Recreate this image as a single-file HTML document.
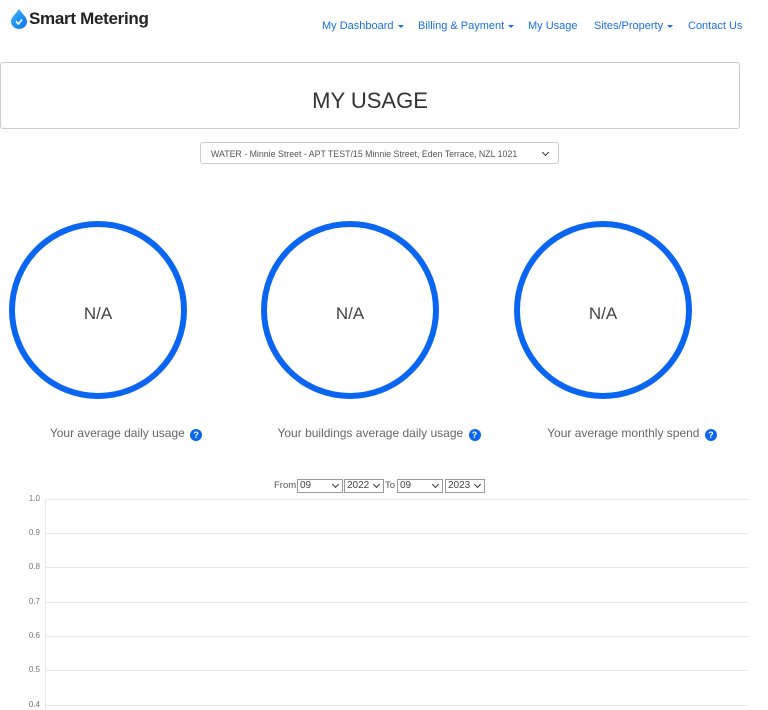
<!DOCTYPE html>
<html><head><meta charset="utf-8"><style>
body{margin:0;width:768px;height:710px;overflow:hidden;background:#fff;font-family:"Liberation Sans",Arial,sans-serif;position:relative}
.a{position:absolute}
.nav{top:20px;font-size:11px;color:#1a6fe8;white-space:nowrap}
.caret{display:inline-block;width:0;height:0;border-left:3px solid transparent;border-right:3px solid transparent;border-top:3px solid #1a6fe8;vertical-align:middle;margin-left:4px}
.circ{width:166px;height:166px;border:6px solid #0a66f0;border-radius:50%;top:221px;display:flex;align-items:center;justify-content:center;font-size:17px;color:#444;padding-top:7px;box-sizing:content-box;height:159px}
.lbl{top:426px;font-size:12px;color:#666;white-space:nowrap;text-align:center;width:260px}
.q{display:inline-block;width:12px;height:12px;border-radius:50%;background:#0a66f0;color:#fff;font-size:9px;font-weight:bold;text-align:center;line-height:12px;vertical-align:-1px;margin-left:2px}
.sel{border:1px solid #999;font-size:10px;color:#444;height:12px;line-height:12px;top:479px;padding-left:2px;box-sizing:content-box}
.chev{position:absolute;width:4px;height:4px;border-right:1.5px solid #333;border-bottom:1.5px solid #333;transform:rotate(45deg)}
.sel .chev{right:4px;top:2px}
.g{left:45px;width:703px;height:1px;background:#e8e8e8}
.yl{left:18px;width:22px;text-align:right;font-size:8px;color:#777}
</style></head><body>
<svg class="a" style="left:10px;top:9px" width="18" height="20" viewBox="0 0 18 20"><defs><linearGradient id="d" x1="0" y1="0" x2="1" y2="1"><stop offset="0" stop-color="#3fb4ff"/><stop offset="1" stop-color="#0a72e8"/></linearGradient></defs><path d="M9 0 C12 5 17 8 17 12.5 A8 7.5 0 0 1 1 12.5 C1 8 6 5 9 0Z" fill="url(#d)"/><path d="M6 12.5 L8.5 15 L12 10.5" stroke="#fff" stroke-width="1.6" fill="none"/></svg>
<div class="a" style="left:29px;top:9px;font-size:17px;font-weight:bold;color:#222;letter-spacing:-0.3px">Smart Metering</div>
<div class="a nav" style="left:322px">My Dashboard<i class="caret"></i></div>
<div class="a nav" style="left:418px">Billing &amp; Payment<i class="caret"></i></div>
<div class="a nav" style="left:528px">My Usage</div>
<div class="a nav" style="left:594px">Sites/Property<i class="caret"></i></div>
<div class="a nav" style="left:688px">Contact Us</div>
<div class="a" style="left:0;top:62px;width:738px;height:65px;border:1px solid #ccc;border-radius:3px;text-align:center;line-height:76px;font-size:22px;color:#333">MY USAGE</div>
<div class="a" style="left:200px;top:142px;width:359px;height:22px;border:1px solid #ccc;border-radius:3px;font-size:8.8px;color:#555;line-height:22px;padding-left:10px;box-sizing:border-box">WATER - Minnie Street - APT TEST/15 Minnie Street, Eden Terrace, NZL 1021<i class="chev" style="right:10px;top:7px"></i></div>
<div class="a circ" style="left:9px">N/A</div>
<div class="a circ" style="left:261px">N/A</div>
<div class="a circ" style="left:514px">N/A</div>
<div class="a lbl" style="left:-4px">Your average daily usage <span class="q">?</span></div>
<div class="a lbl" style="left:249px">Your buildings average daily usage <span class="q">?</span></div>
<div class="a lbl" style="left:502px">Your average monthly spend <span class="q">?</span></div>
<div class="a" style="left:274px;top:480px;font-size:9.5px;color:#555">From</div>
<div class="a sel" style="left:297px;width:42px">09<i class="chev"></i></div>
<div class="a sel" style="left:344px;width:36px">2022<i class="chev"></i></div>
<div class="a" style="left:385px;top:480px;font-size:9.5px;color:#555">To</div>
<div class="a sel" style="left:397px;width:42px">09<i class="chev"></i></div>
<div class="a sel" style="left:445px;width:36px">2023<i class="chev"></i></div>
<div class="a" style="left:45px;top:499px;width:1px;height:211px;background:#e8e8e8"></div>
<div class="a g" style="top:499px"></div><div class="a yl" style="top:494px">1.0</div>
<div class="a g" style="top:533px"></div><div class="a yl" style="top:528px">0.9</div>
<div class="a g" style="top:567px"></div><div class="a yl" style="top:562px">0.8</div>
<div class="a g" style="top:602px"></div><div class="a yl" style="top:597px">0.7</div>
<div class="a g" style="top:636px"></div><div class="a yl" style="top:631px">0.6</div>
<div class="a g" style="top:670px"></div><div class="a yl" style="top:665px">0.5</div>
<div class="a g" style="top:705px"></div><div class="a yl" style="top:700px">0.4</div>
</body></html>
